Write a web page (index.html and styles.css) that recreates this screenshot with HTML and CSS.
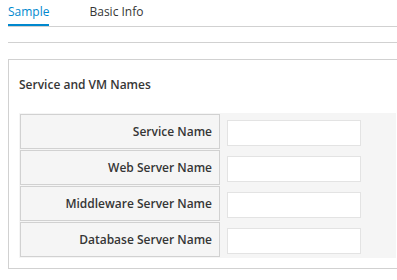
FILE: index.html
```html
<!DOCTYPE html>
<html>
<head>
<meta charset="utf-8">
<link rel="stylesheet" href="styles.css">
</head>
<body>
<div class="page">
  <ul class="tabs">
    <li class="tab active">Sample</li>
    <li class="tab">Basic Info</li>
  </ul>
  <div class="toolbar"></div>
  <div class="box">
    <h3 class="box-title">Service and VM Names</h3>
    <table class="form-table">
      <tr>
        <td class="label">Service Name</td>
        <td class="field"><input class="text-input" type="text"></td>
      </tr>
      <tr>
        <td class="label">Web Server Name</td>
        <td class="field"><input class="text-input" type="text"></td>
      </tr>
      <tr>
        <td class="label">Middleware Server Name</td>
        <td class="field"><input class="text-input" type="text"></td>
      </tr>
      <tr>
        <td class="label">Database Server Name</td>
        <td class="field"><input class="text-input" type="text"></td>
      </tr>
    </table>
  </div>
</div>
</body>
</html>
```
FILE: styles.css
```css
html, body {
  margin: 0;
  padding: 0;
  background: #fff;
}
body {
  font-family: "Open Sans", "Liberation Sans", sans-serif;
  font-size: 12px;
  color: #363636;
}
.page {
  padding-left: 8px;
}
.tabs {
  list-style: none;
  margin: 0;
  padding: 0;
  display: flex;
  border-bottom: 1px solid #d1d1d1;
}
.tab {
  position: relative;
  padding: 3px 0 5px;
  line-height: 18px;
  margin-right: 40px;
  color: #363636;
}
.tab.active {
  color: #0088ce;
}
.tab.active::after {
  content: "";
  position: absolute;
  left: 0;
  right: 0;
  bottom: 0;
  height: 2px;
  background: #0088ce;
}
.toolbar {
  height: 15px;
  border-bottom: 1px solid #d1d1d1;
  margin-bottom: 16px;
}
.box {
  border: 1px solid #d1d1d1;
  border-right: none;
  padding: 0 1px 10px 10px;
}
.box-title {
  margin: 16px 0 19px;
  font-size: 12px;
  line-height: 18px;
  font-weight: 600;
  color: #363636;
}
.form-table {
  width: 100%;
  border-collapse: separate;
  border-spacing: 1px;
  background: #f5f5f5;
}
.label {
  width: 184px;
  padding: 0 7px;
  border: 1px solid #d1d1d1;
  text-align: right;
  vertical-align: middle;
  font-weight: 600;
  color: #363636;
  white-space: nowrap;
}
.field {
  padding: 6px 0 3px 6px;
  vertical-align: top;
}
.text-input {
  display: block;
  box-sizing: border-box;
  width: 134px;
  height: 26px;
  margin: 0;
  border: 1px solid #e3e3e3;
  background: #fff;
  padding: 0 6px;
  font-family: inherit;
  font-size: 12px;
}
```
